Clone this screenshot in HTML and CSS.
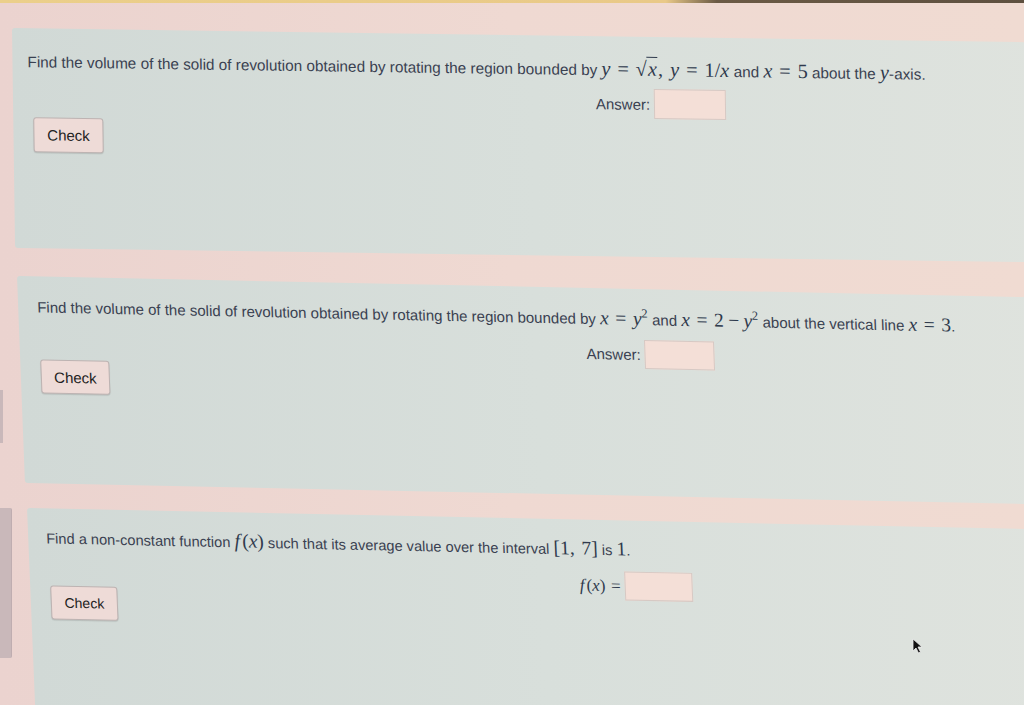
FILE: index.html
```html
<!DOCTYPE html>
<html>
<head>
<meta charset="utf-8">
<link rel="stylesheet" href="styles.css">
</head>
<body>
<div class="topband"></div>
<div class="frame">
  <aside class="rail">
    <div class="stub s1"></div>
    <div class="stub s2"></div>
  </aside>
  <main class="page">
    <section class="panel p1">
      <p class="q q1">Find the volume of the solid of revolution obtained by rotating the region bounded by <span class="m"><i>y</i><span class="rel">=</span>√<span class="rad"><i>x</i></span>,<span class="th"></span><i>y</i><span class="rel">=</span>1/<i>x</i></span> and <span class="m"><i>x</i><span class="rel">=</span>5</span> about the <span class="m"><i>y</i></span>-axis.</p>
      <div class="ans a1"><span class="lbl">Answer:</span><span class="box"></span></div>
      <button class="check c1">Check</button>
    </section>
    <section class="panel p2">
      <p class="q q2">Find the volume of the solid of revolution obtained by rotating the region bounded by <span class="m"><i>x</i><span class="rel">=</span><i>y</i><sup>2</sup></span> and <span class="m"><i>x</i><span class="rel">=</span>2<span class="bin">−</span><i>y</i><sup>2</sup></span> about the vertical line <span class="m"><i>x</i><span class="rel">=</span>3</span>.</p>
      <div class="ans a2"><span class="lbl">Answer:</span><span class="box"></span></div>
      <button class="check c2">Check</button>
    </section>
    <section class="panel p3">
      <p class="q q3">Find a non-constant function <span class="m"><i>f</i><span class="fx">(<i>x</i>)</span></span> such that its average value over the interval <span class="m">[1,<span class="th"></span>7]</span> is <span class="m">1</span>.</p>
      <div class="ans a3"><span class="lbl m"><i>f</i><span class="fx">(<i>x</i>)</span><span class="rel">=</span></span><span class="box"></span></div>
      <button class="check c3">Check</button>
    </section>
  </main>
</div>
<svg class="cursor" width="12" height="16" viewBox="0 0 12 16"><path d="M1 1 L1 13 L4 10 L6.5 15 L8.5 14 L6 9 L10 9 Z" fill="#111" stroke="#eee" stroke-width="0.8"/></svg>
</body>
</html>
```
FILE: styles.css
```css
html, body {
  margin: 0;
  padding: 0;
  height: 705px;
  overflow: hidden;
}
body {
  background: linear-gradient(to right, #ebd3cf, #efd9d2 50%, #f0dbd2);
  font-family: "Liberation Sans", Arial, sans-serif;
  color: #3a4151;
  position: relative;
}
.topband {
  height: 3px;
  background: linear-gradient(to right, #ebcf8a, #e9c988 65%, #6b5a45 70%, #5e5040);
}
.frame {
  display: flex;
}
.rail {
  flex: none;
  width: 12px;
  display: flex;
  flex-direction: column;
  align-items: flex-start;
}
.stub {
  background: #c9b8ba;
}
.s1 { width: 3px; height: 53px; margin-top: 387px; }
.s2 { width: 12px; height: 150px; margin-top: 65px; border-right: 1px solid #bfadb0; border-radius: 0 2px 2px 0; box-sizing: border-box; }
.page {
  flex: 1;
  display: flex;
  flex-direction: column;
  padding-top: 25px;
}
.panel {
  background: linear-gradient(to right, #d1d9d6, #d8dfdb 50%, #dfe3de);
  border-radius: 3px 0 0 3px;
  box-sizing: border-box;
  display: flex;
  flex-direction: column;
  align-items: flex-start;
  margin-right: -30px;
  transform-origin: 0 0;
}
.p1 { margin-left: 0; height: 220px; padding: 21px 0 0 15px; transform: skew(0.8deg, 0.8deg); }
.p2 { margin-left: 5px; height: 207px; margin-top: 28px; padding: 19px 0 0 19px; transform: skew(2.2deg, 1.2deg); }
.p3 { margin-left: 15px; height: 200px; margin-top: 25px; padding: 18px 0 0 18px; transform: skew(2.35deg, 1.2deg); }
.q {
  margin: 0;
  font-size: 14.8px;
  line-height: 22px;
  white-space: nowrap;
}
.q1 { font-size: 15.3px; }
.q2 { font-size: 15px; }
.q3 { font-size: 14.6px; }
.m {
  font-family: "Liberation Serif", "Times New Roman", serif;
  font-size: 19.5px;
  color: #2f3a4d;
}
.q1 .m { font-size: 20.3px; }
.rel { margin: 0 0.34em; }
.bin { margin: 0 0.22em; }
.th { display: inline-block; width: 0.36em; }
.fx { margin-left: 0.12em; }
.m sup { font-size: 12.5px; line-height: 0; vertical-align: 0.6em; }
.rad {
  border-top: 1px solid #2f3a4d;
  padding: 0 1px;
}
.ans {
  display: flex;
  align-items: center;
  gap: 4px;
}
.a1 { margin: 7px 0 0 568px; }
.a2 { margin: 9px 0 0 548px; }
.a3 { margin: 10px 0 0 532px; }
.lbl { font-size: 15px; }
.lbl.m { font-size: 17px; }
.lbl .rel { margin-right: 0; }
.box {
  display: block;
  width: 72px;
  height: 30px;
  background: #f4dfd7;
  border: 1px solid #d6c9c4;
  box-sizing: border-box;
}
.a2 .box { width: 70px; height: 29px; }
.a3 .box { width: 68px; height: 29px; }
.check {
  font-family: "Liberation Sans", Arial, sans-serif;
  font-size: 15px;
  color: #222;
  background: #eedbd7;
  border: 1px solid #bdb3b2;
  border-radius: 3px;
  box-shadow: 0 1px 1px rgba(0,0,0,0.12);
  width: 70px;
  height: 35px;
  padding: 0;
}
.c1 { margin: 7px 0 0 5px; }
.c2 { margin: 3px 0 0 1px; width: 69px; height: 34px; }
.c3 { margin: -3px 0 0 2px; width: 67px; height: 34px; font-size: 14px; }
.cursor {
  position: absolute;
  left: 912px;
  top: 638px;
}
```
